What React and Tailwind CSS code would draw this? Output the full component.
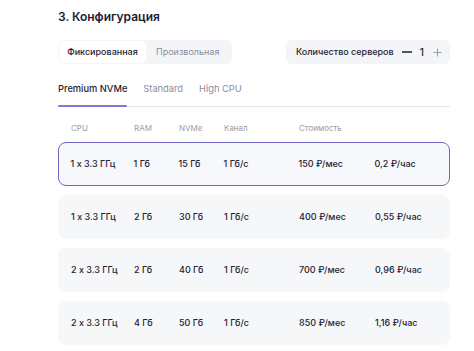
import React from "react";

const rows = [
  ["1 x 3.3 ГГц", "1 Гб", "15 Гб", "1 Гб/с", "150 ₽/мес", "0,2 ₽/час"],
  ["1 x 3.3 ГГц", "2 Гб", "30 Гб", "1 Гб/с", "400 ₽/мес", "0,55 ₽/час"],
  ["2 x 3.3 ГГц", "2 Гб", "40 Гб", "1 Гб/с", "700 ₽/мес", "0,96 ₽/час"],
  ["2 x 3.3 ГГц", "4 Гб", "50 Гб", "1 Гб/с", "850 ₽/мес", "1,16 ₽/час"],
];

function Cells({ cells }) {
  const widths = ["w-[63px]", "w-[45px]", "w-[45px]", "w-[75px]", "w-[76px]", "w-[70px]"];
  return cells.map((c, i) => (
    <div key={i} className={`${widths[i]} shrink-0 whitespace-nowrap`}>{c}</div>
  ));
}

export default function App() {
  return (
    <div className="w-[474px] h-[351px] bg-white overflow-hidden font-['Inter',sans-serif] [font-feature-settings:'calt'_0] text-[#1f2233]">
      <div className="w-[392px] ml-[58px] pt-[8px]">
        <div className="text-[12px] font-semibold leading-[17px] text-[#1c2030]">3. Конфигурация</div>
        <div className="flex justify-between mt-[15px]">
          <div className="flex h-[24px] bg-[#f4f5f8] rounded-[6px] p-[1px] w-[174px] text-[9px]">
            <div className="bg-white rounded-[5px] w-[87px] flex items-center justify-center text-[#1f2233] font-medium">Фиксированная</div>
            <div className="pl-[10px] flex items-center text-[#8a8d9a]">Произвольная</div>
          </div>
          <div className="flex h-[24px] w-[164px] items-center bg-[#f4f5f8] rounded-[6px] pl-[10px] text-[9px] font-medium">
            <span>Количество серверов</span>
            <span className="ml-[8px] w-[10px] h-[1.2px] bg-[#4f5260]"></span>
            <span className="ml-[8px] text-[10px]">1</span>
            <svg className="ml-[9px]" width="9" height="9" viewBox="0 0 9 9">
              <path d="M4.5 0.5V8.5M0.5 4.5H8.5" stroke="#9a9ca8" strokeWidth="1" />
            </svg>
          </div>
        </div>
        <div className="mt-[17px] border-b border-[#e6e7ec] flex gap-[16px] text-[9.3px] h-[26px] leading-[16px]">
          <div className="relative font-medium text-[#1f2233]">
            Premium NVMe
            <div className="absolute left-0 right-0 bottom-[-1px] h-[2px] bg-[#7f76d6] rounded"></div>
          </div>
          <div className="text-[#8a8d9a]">Standard</div>
          <div className="text-[#8a8d9a]">High CPU</div>
        </div>
        <div className="flex pl-[13px] mt-[16px] text-[8px] text-[#9a9ca8] h-[10px] items-center">
          <Cells cells={["CPU", "RAM", "NVMe", "Канал", "Стоимость", ""]} />
        </div>
        <div className="mt-[9px] flex flex-col gap-[9px]">
          {rows.map((r, i) => (
            <div
              key={i}
              className={`flex items-center h-[44px] rounded-[8px] text-[9px] font-medium ${
                i === 0 ? "border-[1.5px] border-[#6f68c9] bg-[#f7f8fb] pl-[11.5px]" : "bg-[#f6f7f9] pl-[13px]"
              }`}
            >
              <Cells cells={r} />
            </div>
          ))}
        </div>
      </div>
    </div>
  );
}
